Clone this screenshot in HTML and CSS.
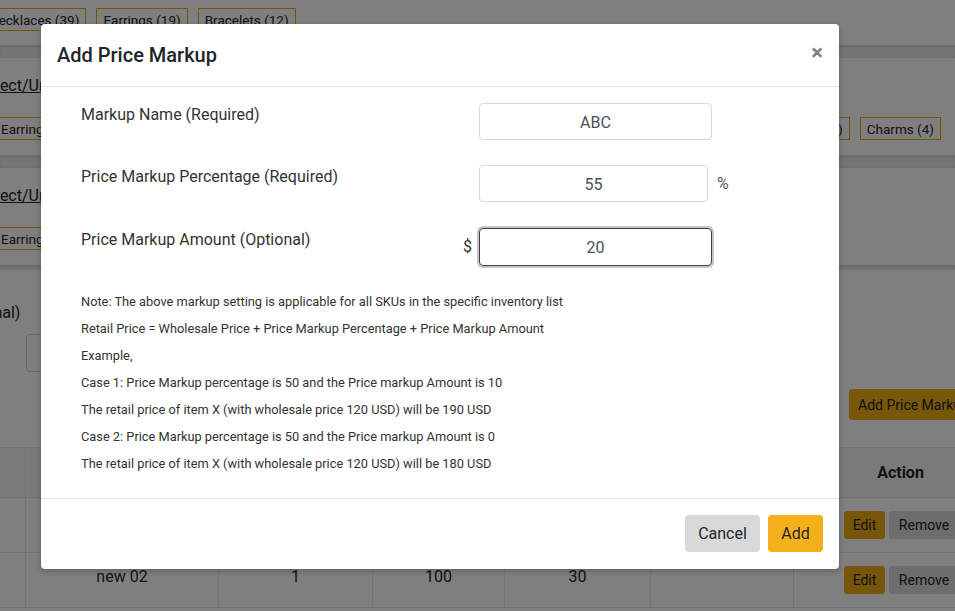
FILE: index.html
```html
<!DOCTYPE html>
<html>
<head>
<meta charset="utf-8">
<link rel="stylesheet" href="styles.css">
</head>
<body>
<div class="page">
  <section class="card card-top">
    <div class="tags tags-shift">
      <span class="tag">Necklaces (39)</span>
      <span class="tag">Earrings (19)</span>
      <span class="tag">Bracelets (12)</span>
    </div>
  </section>
  <div class="band"></div>
  <section class="card">
    <a class="select-all">Select/Unselect All</a>
    <div class="tags tags-split">
      <div class="tags-left"><span class="tag">Earrings (19)</span></div>
      <div class="tags-right"><span class="tag">Bracelets (12)</span><span class="tag">Charms (4)</span></div>
    </div>
  </section>
  <div class="band"></div>
  <section class="card">
    <a class="select-all">Select/Unselect All</a>
    <div class="tags tags-split">
      <div class="tags-left"><span class="tag">Earrings (19)</span></div>
    </div>
  </section>
  <div class="band band-thin"></div>
  <section class="card card-bottom">
    <div class="opt-label">Price Markup Amount (Optional)</div>
    <div class="opt-input"></div>
    <div class="actions-row"><button class="btn-add-markup">Add Price Markup</button></div>
    <table class="grid">
      <thead>
        <tr><th class="c0"></th><th class="c1"></th><th class="c2"></th><th class="c3"></th><th class="c4"></th><th class="c5"></th><th class="c6">Action</th></tr>
      </thead>
      <tbody>
        <tr><td></td><td>new 01</td><td>1</td><td>100</td><td>30</td><td></td><td class="act"><button class="b-edit">Edit</button><button class="b-remove">Remove</button></td></tr>
        <tr><td></td><td>new 02</td><td>1</td><td>100</td><td>30</td><td></td><td class="act"><button class="b-edit">Edit</button><button class="b-remove">Remove</button></td></tr>
      </tbody>
    </table>
  </section>
</div>

<div class="overlay"></div>

<div class="modal">
  <div class="modal-header">
    <h5 class="modal-title">Add Price Markup</h5>
    <span class="close">&times;</span>
  </div>
  <div class="modal-body">
    <div class="form-row">
      <label class="f-label">Markup Name (Required)</label>
      <span class="prefix"></span>
      <div class="f-input">ABC</div>
    </div>
    <div class="form-row">
      <label class="f-label">Price Markup Percentage (Required)</label>
      <span class="prefix"></span>
      <div class="f-input f-input-narrow">55</div>
      <span class="suffix">%</span>
    </div>
    <div class="form-row form-row-last">
      <label class="f-label">Price Markup Amount (Optional)</label>
      <span class="prefix">$</span>
      <div class="f-input focused">20</div>
    </div>
    <div class="notes">
      <p>Note: The above markup setting is applicable for all SKUs in the specific inventory list</p>
      <p>Retail Price = Wholesale Price + Price Markup Percentage + Price Markup Amount</p>
      <p>Example,</p>
      <p>Case 1: Price Markup percentage is 50 and the Price markup Amount is 10</p>
      <p>The retail price of item X (with wholesale price 120 USD) will be 190 USD</p>
      <p>Case 2: Price Markup percentage is 50 and the Price markup Amount is 0</p>
      <p>The retail price of item X (with wholesale price 120 USD) will be 180 USD</p>
    </div>
  </div>
  <div class="modal-footer">
    <button class="btn btn-cancel">Cancel</button>
    <button class="btn btn-add">Add</button>
  </div>
</div>
</body>
</html>
```

FILE: styles.css
```css
* { box-sizing: border-box; }
html, body { margin: 0; padding: 0; }
body {
  width: 955px;
  height: 611px;
  overflow: hidden;
  position: relative;
  font-family: Roboto, "Liberation Sans", sans-serif;
  color: #212529;
  background: #fff;
}
.page { width: 955px; height: 611px; overflow: hidden; }
.card { background: #fff; height: 97px; padding: 18px 14px 0 0; }
.card-top { height: 45px; padding-top: 8px; }
.band {
  height: 13px;
  background: #e9e9e9;
  box-shadow: inset 0 2px 2px rgba(0,0,0,0.08), inset 0 -1px 1px rgba(0,0,0,0.04);
}
.band-thin { height: 5px; }
.tags { display: flex; font-size: 13.5px; }
.tags-shift { margin-left: -18px; gap: 10px; }
.tag {
  display: inline-block;
  border: 1px solid #f0a800;
  padding: 2px 6px;
  height: 23px;
  line-height: 18px;
  color: #212529;
  white-space: nowrap;
}
.select-all {
  display: block;
  margin-left: -22px;
  font-size: 16px;
  line-height: 20px;
  text-decoration: underline;
  color: #212529;
  white-space: nowrap;
}
.tags-split { justify-content: space-between; margin-top: 21px; }
.tags-left { margin-left: -6px; }
.tags-right { display: flex; gap: 10px; }
.card-bottom { height: auto; padding: 0; }
.opt-label { margin-left: -209px; padding-top: 31px; font-size: 16px; line-height: 24px; height: 64px; }
.opt-input {
  margin-left: 26px;
  width: 240px;
  height: 38px;
  border: 1px solid #ced4da;
  border-radius: 4px;
}
.actions-row { display: flex; justify-content: flex-end; margin-top: 17px; height: 58px; }
.btn-add-markup {
  margin-right: -40px;
  width: 146px;
  height: 31px;
  border: 0;
  border-radius: 3px;
  background: #f1ae13;
  font-family: Roboto, "Liberation Sans", sans-serif;
  font-size: 14px;
  color: #212529;
  text-align: left;
  padding-left: 9px;
}
.grid { border-collapse: collapse; width: 1032px; margin-left: -25px; font-size: 16px; table-layout: fixed; }
.grid th, .grid td { border: 1px solid #e6e6e6; text-align: center; }
.grid th { height: 50px; background: #f5f5f5; font-weight: 700; color: #212529; }
.grid td { height: 55px; vertical-align: top; padding: 12px 0 0; line-height: 24px; }
.c0 { width: 50px; } .c1 { width: 193px; } .c2 { width: 154px; } .c3 { width: 132px; }
.c4 { width: 146px; } .c5 { width: 143px; } .c6 { width: 214px; }
.grid td.act { text-align: left; padding: 0 0 0 50px; vertical-align: middle; white-space: nowrap; }
.b-edit, .b-remove {
  border: 0; border-radius: 3px; height: 28px; font-size: 14px;
  font-family: Roboto, "Liberation Sans", sans-serif; color: #212529;
  vertical-align: middle;
}
.b-edit { background: #f0ad13; width: 41px; margin-right: 4px; }
.b-remove { background: #dadada; width: 70px; }

.overlay {
  position: absolute;
  inset: 0;
  background: rgba(0,0,0,0.5);
}

.modal {
  position: absolute;
  left: 41px;
  top: 24px;
  width: 798px;
  height: 545px;
  background: #fff;
  border-radius: 4px;
  box-shadow: 0 2px 6px rgba(0,0,0,0.25);
  display: flex;
  flex-direction: column;
}
.modal-header {
  height: 63px;
  display: flex;
  align-items: center;
  justify-content: space-between;
  padding: 0 16px;
  border-bottom: 1px solid #e3e3e3;
}
.modal-title { margin: 0; font-size: 20px; font-weight: 500; color: #212529; }
.close { font-size: 22px; font-weight: 700; color: #7f7f7f; line-height: 1; margin-top: -4px; }
.modal-body { flex: 1; padding: 16px 16px 0 40px; }
.form-row { display: flex; align-items: flex-start; margin-bottom: 25px; }
.form-row-last { margin-top: 3px; margin-bottom: 0; }
.f-label { width: 382px; font-size: 16px; line-height: 24px; color: #333; }
.prefix { width: 16px; font-size: 16px; line-height: 38px; color: #333; }
.suffix { margin-left: 9px; font-size: 16px; line-height: 38px; color: #555; }
.f-input {
  width: 233px;
  height: 37px;
  border: 1px solid #d9d9d9;
  border-radius: 4px;
  font-size: 16px;
  line-height: 37px;
  text-align: center;
  color: #495057;
}
.f-input-narrow { width: 229px; }
.f-input.focused {
  height: 38px;
  border: 1px solid #3e3b68;
  box-shadow: 0 0 0 2px #c6c6c6;
}
.notes { margin-top: 26px; }
.notes p { margin: 0 0 8px; font-size: 12.8px; line-height: 19px; color: #333; }
.modal-footer {
  height: 71px;
  border-top: 1px solid #e3e3e3;
  display: flex;
  justify-content: flex-end;
  align-items: flex-start;
  padding: 16px 16px 0;
  gap: 8px;
}
.btn {
  height: 37px;
  border: 0;
  border-radius: 4px;
  padding: 0 12px;
  font-family: Roboto, "Liberation Sans", sans-serif;
  font-size: 16px;
  color: #212529;
}
.btn-cancel { background: #d9d9d9; width: 75px; }
.btn-add { background: #f3b01b; width: 55px; }
```
